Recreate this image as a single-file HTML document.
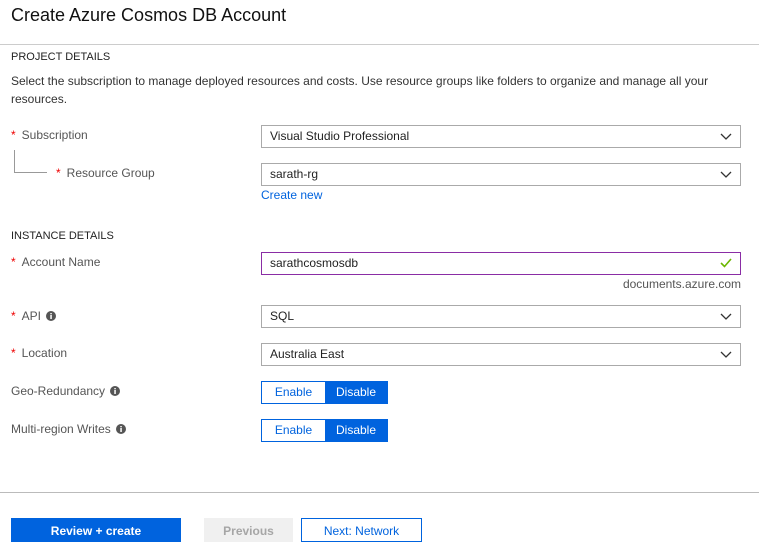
<!DOCTYPE html>
<html><head><meta charset="utf-8"><style>
*{box-sizing:border-box;margin:0;padding:0}
body{width:759px;height:555px;background:#fff;font-family:"Liberation Sans",sans-serif;color:#333;position:relative;overflow:hidden;font-size:12px}
.a{position:absolute;white-space:nowrap}
.star{color:#e00;margin-right:6px}
.lbl{color:#555;font-size:12px}
.box{position:absolute;left:261px;width:480px;height:23px;border:1px solid #aaa;padding:0 8px;line-height:21px;font-size:12px;color:#222}
.chev{position:absolute;right:8px;top:7px}
.tog{position:absolute;left:261px;width:127px;height:23px;border:1px solid #0063de;display:flex;font-size:12px}
.tog span{line-height:21px;text-align:center}
.tog .e{width:63px;color:#0063de}
.tog .d{flex:1;background:#0063de;color:#fff}
.info{display:inline-block;vertical-align:-1px;margin-left:5px}
</style></head><body>
<div class="a" style="left:11px;top:5px;font-size:18px;color:#111">Create Azure Cosmos DB Account</div>
<div class="a" style="left:0;top:44px;width:759px;height:1px;background:#ccc"></div>
<div class="a" style="left:11px;top:51px;font-size:11px;color:#222">PROJECT DETAILS</div>
<div class="a" style="left:11px;top:72px;color:#333;line-height:18px">Select the subscription to manage deployed resources and costs. Use resource groups like folders to organize and manage all your<br>resources.</div>
<div class="a lbl" style="left:11px;top:128px"><span class="star">*</span>Subscription</div>
<div class="box" style="top:125px">Visual Studio Professional<svg class="chev" width="12" height="8"><path d="M1 1l5 5 5-5" stroke="#333" fill="none" stroke-width="1.3"/></svg></div>
<div class="a" style="left:14px;top:150px;width:1px;height:22px;background:#999"></div>
<div class="a" style="left:14px;top:172px;width:33px;height:1px;background:#999"></div>
<div class="a lbl" style="left:56px;top:166px"><span class="star">*</span>Resource Group</div>
<div class="box" style="top:163px">sarath-rg<svg class="chev" width="12" height="8"><path d="M1 1l5 5 5-5" stroke="#333" fill="none" stroke-width="1.3"/></svg></div>
<div class="a" style="left:261px;top:188px;color:#0063de">Create new</div>
<div class="a" style="left:11px;top:230px;font-size:11px;color:#222">INSTANCE DETAILS</div>
<div class="a lbl" style="left:11px;top:255px"><span class="star">*</span>Account Name</div>
<div class="box" style="top:252px;border-color:#8a2da5">sarathcosmosdb<svg class="chev" style="top:5px" width="12" height="10"><path d="M1 5l3.5 3.5L11 1" stroke="#6bb700" fill="none" stroke-width="1.6"/></svg></div>
<div class="a" style="right:18px;top:277px;color:#555">documents.azure.com</div>
<div class="a lbl" style="left:11px;top:309px"><span class="star">*</span>API<svg class="info" width="10" height="10"><circle cx="5" cy="5" r="5" fill="#555"/><rect x="4.3" y="4" width="1.5" height="4" fill="#fff"/><rect x="4.3" y="2" width="1.5" height="1.3" fill="#fff"/></svg></div>
<div class="box" style="top:305px">SQL<svg class="chev" width="12" height="8"><path d="M1 1l5 5 5-5" stroke="#333" fill="none" stroke-width="1.3"/></svg></div>
<div class="a lbl" style="left:11px;top:346px"><span class="star">*</span>Location</div>
<div class="box" style="top:343px">Australia East<svg class="chev" width="12" height="8"><path d="M1 1l5 5 5-5" stroke="#333" fill="none" stroke-width="1.3"/></svg></div>
<div class="a lbl" style="left:11px;top:384px">Geo-Redundancy<svg class="info" width="10" height="10"><circle cx="5" cy="5" r="5" fill="#555"/><rect x="4.3" y="4" width="1.5" height="4" fill="#fff"/><rect x="4.3" y="2" width="1.5" height="1.3" fill="#fff"/></svg></div>
<div class="tog" style="top:381px"><span class="e">Enable</span><span class="d">Disable</span></div>
<div class="a lbl" style="left:11px;top:422px">Multi-region Writes<svg class="info" width="10" height="10"><circle cx="5" cy="5" r="5" fill="#555"/><rect x="4.3" y="4" width="1.5" height="4" fill="#fff"/><rect x="4.3" y="2" width="1.5" height="1.3" fill="#fff"/></svg></div>
<div class="tog" style="top:419px"><span class="e">Enable</span><span class="d">Disable</span></div>
<div class="a" style="left:0;top:492px;width:759px;height:1px;background:#bbb"></div>
<div class="a" style="left:11px;top:518px;width:170px;height:24px;background:#0063de;color:#fff;font-weight:bold;text-align:center;line-height:26px">Review + create</div>
<div class="a" style="left:204px;top:518px;width:89px;height:24px;background:#f0f0f0;color:#a6a6a6;font-weight:bold;text-align:center;line-height:26px">Previous</div>
<div class="a" style="left:301px;top:518px;width:121px;height:24px;border:1px solid #0063de;color:#0063de;text-align:center;line-height:24px">Next: Network</div>
</body></html>
